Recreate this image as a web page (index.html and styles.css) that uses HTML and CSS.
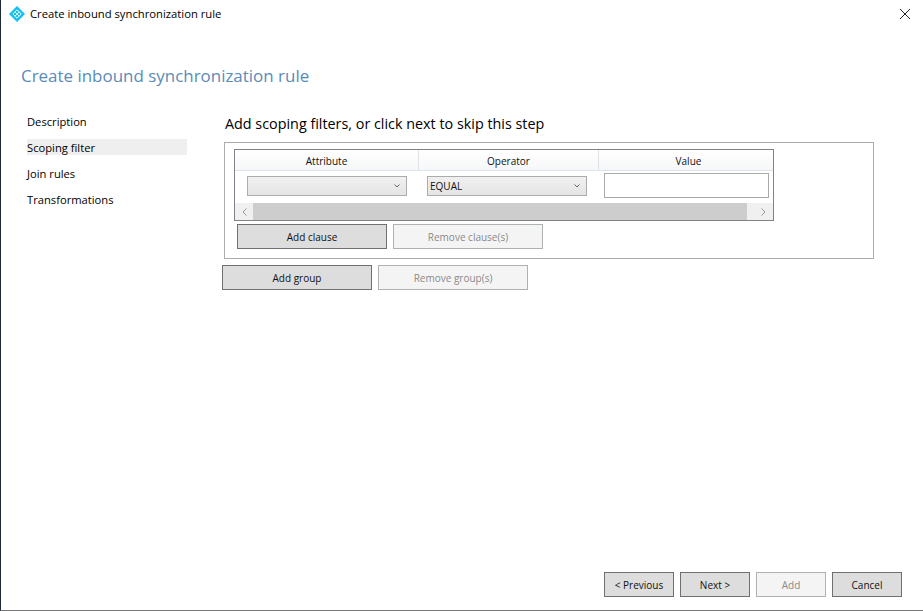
FILE: index.html
```html
<!DOCTYPE html>
<html lang="en">
<head>
<meta charset="utf-8">
<title>Create inbound synchronization rule</title>
<link rel="stylesheet" href="styles.css">
</head>
<body>
<div class="window">
  <header class="titlebar">
    <svg class="logo" viewBox="0 0 16 16" width="16" height="16" aria-hidden="true">
      <path d="M8 0 16 8 8 16 0 8Z" fill="#0fc0f5"/>
      <path d="M8 3.8 12.2 8 8 12.2 3.8 8Z" fill="#0fc0f5" stroke="#fff" stroke-width="1"/>
      <path d="M5.9 5.9 10.1 10.1M10.1 5.9 5.9 10.1" stroke="#fff" stroke-width=".9" fill="none"/>
    </svg>
    <span class="title">Create inbound synchronization rule</span>
    <svg class="close" viewBox="0 0 10 10" width="10" height="10" aria-hidden="true">
      <path d="M0 0 10 10M10 0 0 10" stroke="#222" stroke-width="1" fill="none"/>
    </svg>
  </header>
  <h1 class="page-title">Create inbound synchronization rule</h1>
  <main class="body">
    <nav class="steps">
      <div class="step">Description</div>
      <div class="step active">Scoping filter</div>
      <div class="step">Join rules</div>
      <div class="step">Transformations</div>
    </nav>
    <section class="content">
      <h2 class="section-title">Add scoping filters, or click next to skip this step</h2>
      <div class="group-box">
        <div class="grid">
          <div class="grid-head">
            <div class="col col-a">Attribute</div>
            <div class="col col-b">Operator</div>
            <div class="col col-c">Value</div>
          </div>
          <div class="grid-row">
            <div class="cell cell-a">
              <div class="combo"><span class="combo-text"></span>
                <svg class="chev" viewBox="0 0 6 4" width="6" height="4" aria-hidden="true"><path d="M.5.5 3 3 5.5.5" fill="none" stroke="#666"/></svg>
              </div>
            </div>
            <div class="cell cell-b">
              <div class="combo"><span class="combo-text">EQUAL</span>
                <svg class="chev" viewBox="0 0 6 4" width="6" height="4" aria-hidden="true"><path d="M.5.5 3 3 5.5.5" fill="none" stroke="#666"/></svg>
              </div>
            </div>
            <div class="cell cell-c"><div class="input"></div></div>
          </div>
          <div class="scrollbar">
            <div class="sb-btn sb-left">
              <svg viewBox="0 0 5 8" width="5" height="8" aria-hidden="true"><path d="M4.5.5 1 4 4.5 7.5" fill="none" stroke="#999"/></svg>
            </div>
            <div class="sb-thumb"></div>
            <div class="sb-btn sb-right">
              <svg viewBox="0 0 5 8" width="5" height="8" aria-hidden="true"><path d="M.5.5 4 4 .5 7.5" fill="none" stroke="#999"/></svg>
            </div>
          </div>
        </div>
        <div class="btn-row clause-row">
          <button class="btn wide">Add clause</button>
          <button class="btn wide" disabled>Remove clause(s)</button>
        </div>
      </div>
      <div class="btn-row group-row">
        <button class="btn wide">Add group</button>
        <button class="btn wide" disabled>Remove group(s)</button>
      </div>
    </section>
  </main>
  <footer class="footer">
    <button class="btn small">&lt; Previous</button>
    <button class="btn small">Next &gt;</button>
    <button class="btn small" disabled>Add</button>
    <button class="btn small">Cancel</button>
  </footer>
</div>
</body>
</html>
```
FILE: styles.css
```css
* { box-sizing: border-box; }
html, body { margin: 0; height: 100%; }
body {
  background: #fff;
  color: #111;
  font-family: "Open Sans", "Noto Sans", "Liberation Sans", sans-serif;
  font-size: 11px;
  overflow: hidden;
}
.window {
  width: 923px;
  height: 611px;
  display: flex;
  flex-direction: column;
  border-left: 1px solid #1c2a3a;
  border-bottom: 1px solid #777;
}
.titlebar {
  height: 27px;
  display: flex;
  align-items: center;
  padding-left: 8px;
  padding-right: 13px;
  flex: none;
}
.logo { flex: none; }
.title { margin-left: 5px; font-size: 11.25px; color: #000; }
.close { margin-left: auto; }
.page-title {
  margin: 37px 0 0 20px;
  height: 24px;
  line-height: 24px;
  font-size: 16.95px;
  font-weight: 400;
  color: #5a8bb8;
  flex: none;
}
.body {
  flex: 1;
  display: flex;
  margin-top: 25px;
  min-height: 0;
}
.steps {
  width: 160px;
  margin-left: 26px;
  display: flex;
  flex-direction: column;
  gap: 10px;
  flex: none;
}
.step { height: 16px; line-height: 17px; font-size: 11.2px; color: #000; }
.step:last-child, .step:nth-child(3), .step:first-child { line-height: 18px; }
.step.active { background: #efefef; }
.content { margin-left: 35px; flex: none; width: 652px; }
.section-title {
  margin: 0 0 7px 3px;
  height: 22px;
  line-height: 22px;
  font-size: 14.35px;
  font-weight: 400;
  color: #000;
}
.group-box {
  margin-left: 2px;
  width: 650px;
  height: 117px;
  border: 1px solid #aaaab0;
  padding: 6px 0 0 9px;
}
.grid {
  width: 540px;
  height: 72px;
  border: 1px solid #7f8388;
  display: flex;
  flex-direction: column;
}
.grid-head {
  height: 21px;
  display: flex;
  border-bottom: 1px solid #dfe3e8;
  background: linear-gradient(#fff, #f6f7f8);
  flex: none;
}
.col {
  text-align: center;
  line-height: 22px;
  font-size: 10px;
  border-right: 1px solid #dfe3e8;
}
.col-a { width: 184px; }
.col-b { width: 180px; }
.col-c { flex: 1; border-right: 0; padding-left: 5px; }
.grid-row { height: 31px; padding-bottom: 2px; display: flex; flex: none; }
.cell { display: flex; align-items: center; }
.cell-a { width: 192px; padding-left: 12px; }
.cell-b { width: 177px; }
.cell-c { flex: 1; padding-left: 0; }
.combo {
  width: 160px;
  height: 20px;
  border: 1px solid #acacac;
  background: linear-gradient(#f0f0f0, #e5e5e5);
  display: flex;
  align-items: center;
  justify-content: space-between;
  padding: 0 6px 0 2px;
  font-size: 10px;
  color: #111;
}
.input {
  width: 165px;
  height: 25px;
  border: 1px solid #a9a9a9;
  background: #fff;
}
.scrollbar {
  height: 17px;
  display: flex;
  background: #f0f0f0;
  flex: none;
  margin-top: auto;
}
.sb-btn { display: flex; align-items: center; justify-content: center; flex: none; }
.sb-left { width: 18px; }
.sb-right { width: 26px; padding-left: 6px; }
.sb-thumb { flex: 1; background: #cdcdcd; }
.btn-row { display: flex; gap: 6px; }
.clause-row { margin: 3px 0 0 3px; }
.group-row { margin-top: 6px; }
.btn {
  height: 25px;
  padding: 0;
  border: 1px solid #707070;
  background: #dddddd;
  color: #111;
  font-family: inherit;
  font-size: 10px;
  line-height: 1;
}
.btn:disabled {
  border-color: #adb2b5;
  background: #f4f4f4;
  color: #8a8a8a;
}
.wide { width: 150px; }
.small { width: 70px; }
.footer {
  display: flex;
  justify-content: flex-end;
  gap: 6px;
  padding-right: 21px;
  margin-bottom: 13px;
  flex: none;
}
```
